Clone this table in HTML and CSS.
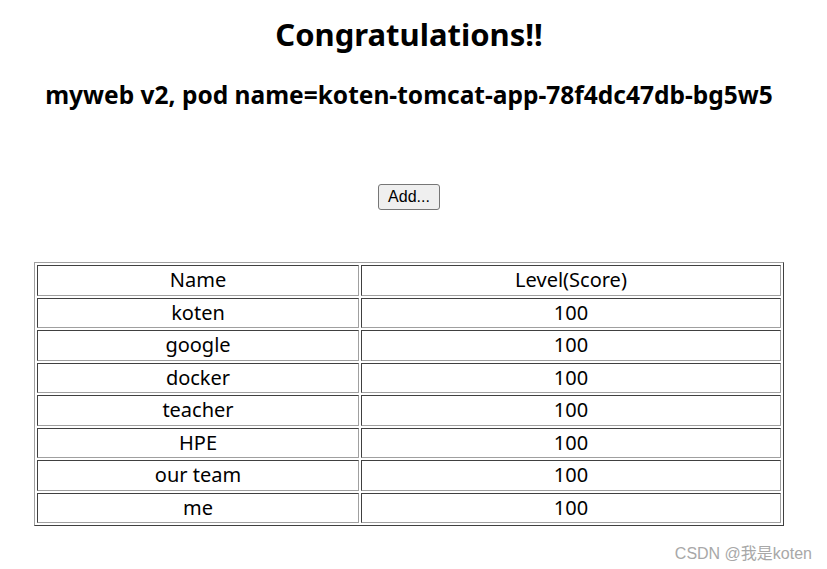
FILE: index.html
```html
<!DOCTYPE html>
<html>
<head>
<meta charset="utf-8">
<link rel="stylesheet" href="styles.css">
</head>
<body>
<div class="page">
  <h1 class="title">Congratulations!!</h1>
  <h2 class="subtitle">myweb v2, pod name=koten-tomcat-app-78f4dc47db-bg5w5</h2>
  <div class="actions"><button class="add-btn" type="button">Add...</button></div>
  <table class="scores">
    <tr><td class="col-name">Name</td><td>Level(Score)</td></tr>
    <tr><td class="col-name">koten</td><td>100</td></tr>
    <tr><td class="col-name">google</td><td>100</td></tr>
    <tr><td class="col-name">docker</td><td>100</td></tr>
    <tr><td class="col-name">teacher</td><td>100</td></tr>
    <tr><td class="col-name">HPE</td><td>100</td></tr>
    <tr><td class="col-name">our team</td><td>100</td></tr>
    <tr><td class="col-name">me</td><td>100</td></tr>
  </table>
</div>
<div class="watermark">CSDN @我是koten</div>
</body>
</html>
```
FILE: styles.css
```css
html, body {
  margin: 0;
  padding: 0;
  background: #fff;
}
body {
  font-family: "Noto Sans", "Noto Sans CJK SC", sans-serif;
  color: #000;
}
.page {
  width: 802px;
  margin-left: 8px;
  padding-top: 12px;
  display: flex;
  flex-direction: column;
  align-items: center;
}
.title {
  margin: 0;
  font-size: 31px;
  line-height: 44px;
  font-weight: 700;
}
.subtitle {
  margin: 23px 0 0 0;
  font-size: 24.5px;
  line-height: 32px;
  font-weight: 700;
}
.actions {
  margin-top: 73px;
  display: flex;
}
.add-btn {
  font-family: "Liberation Sans", Arial, sans-serif;
  font-size: 16px;
  height: 26px;
  padding: 0 9px;
  background: #efefef;
  border: 1px solid #767676;
  border-radius: 3px;
  color: #000;
}
.scores {
  margin-top: 52px;
  width: 750px;
  border: 1px solid;
  border-color: #a0a0a0 #404040 #404040 #a0a0a0;
  border-spacing: 2px;
  font-size: 20px;
}
.scores td {
  border: 1px solid;
  border-color: #404040 #a0a0a0 #a0a0a0 #404040;
  text-align: center;
  height: 28.5px;
  padding: 0;
  line-height: 28px;
}
.scores .col-name {
  width: 320px;
}
.watermark {
  position: absolute;
  right: 15px;
  top: 540px;
  font-family: "Liberation Sans", "Noto Sans CJK SC", sans-serif;
  font-size: 16px;
  color: #a8a8a8;
}
```
